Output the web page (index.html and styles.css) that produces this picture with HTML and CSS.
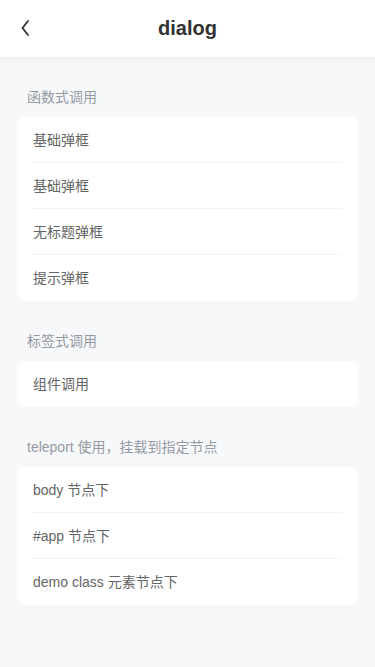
FILE: index.html
```html
<!DOCTYPE html>
<html lang="zh-CN">
<head>
  <meta charset="UTF-8">
  <meta name="viewport" content="width=device-width, initial-scale=1">
  <title>dialog</title>
  <link rel="stylesheet" href="styles.css">
</head>
<body>
  <div class="nav-bar">
    <span class="nav-back">
      <svg width="12" height="18" viewBox="0 0 12 18"><path d="M9 2 L3.5 9 L9 16" fill="none" stroke="#323233" stroke-width="1.8" stroke-linecap="round" stroke-linejoin="round"/></svg>
    </span>
    <h1 class="nav-title">dialog</h1>
  </div>

  <div class="page">
    <div class="group-title">函数式调用</div>
    <div class="cell-group">
      <div class="cell">基础弹框</div>
      <div class="cell">基础弹框</div>
      <div class="cell">无标题弹框</div>
      <div class="cell">提示弹框</div>
    </div>

    <div class="group-title">标签式调用</div>
    <div class="cell-group">
      <div class="cell">组件调用</div>
    </div>

    <div class="group-title">teleport 使用，挂载到指定节点</div>
    <div class="cell-group">
      <div class="cell">body 节点下</div>
      <div class="cell">#app 节点下</div>
      <div class="cell">demo class 元素节点下</div>
    </div>
  </div>
</body>
</html>
```

FILE: styles.css
```css
* { box-sizing: border-box; }
html, body {
  margin: 0;
  min-height: 100vh;
  background: #f7f8fa;
  font-family: "Liberation Sans", Arial, "Noto Sans CJK SC", sans-serif;
}
.nav-bar {
  position: relative;
  height: 57px;
  background: #fff;
  display: flex;
  align-items: center;
  justify-content: center;
  box-shadow: 0 2px 10px rgba(0,0,0,0.06);
}
.nav-back {
  position: absolute;
  left: 19px;
  top: 19px;
  display: flex;
}
.nav-title {
  margin: 0;
  font-size: 20px;
  font-weight: bold;
  color: #323233;
}
.page { padding: 0 17px 20px; }
.group-title {
  padding: 30px 10px 10px;
  font-size: 14px;
  line-height: 20px;
  color: #959aa3;
}
.cell-group {
  background: #fff;
  border-radius: 8px;
  padding: 0 16px;
}
.cell {
  height: 46px;
  line-height: 46px;
  font-size: 14px;
  color: #646566;
  border-bottom: 1px solid #f2f3f5;
}
.cell:last-child { border-bottom: none; }
```
